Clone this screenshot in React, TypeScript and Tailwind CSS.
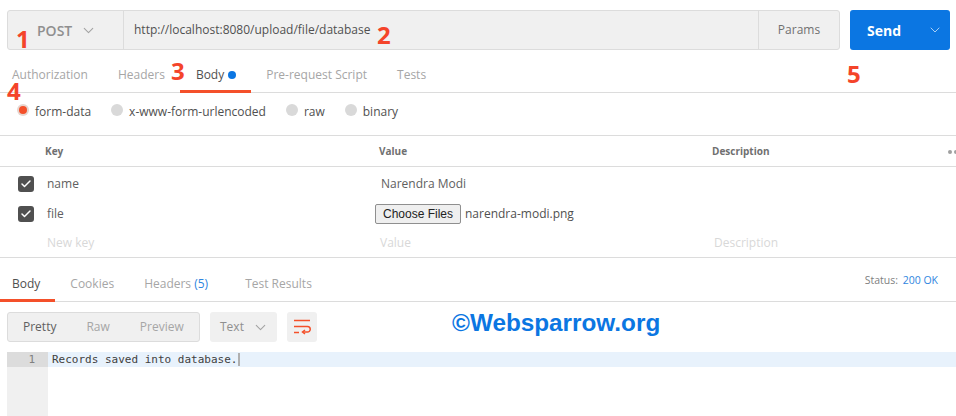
import { Check, ChevronDown } from 'lucide-react';

const font = "font-['Open_Sans',sans-serif]";
const tabClass = 'text-[12px] leading-none text-[#a6a6a6]';
const noteClass = "absolute font-['Open_Sans',sans-serif] text-[24px] leading-[18px] font-bold text-[#f4442a]";

function Radio({ active, label }: { active?: boolean; label: string }) {
    return (
        <div className="flex items-start gap-[6px]">
            {active ? (
                <span className="flex h-[12px] w-[12px] items-center justify-center rounded-full bg-[#e6d6d0]">
                    <span className="h-[8px] w-[8px] rounded-full bg-[#f4502a]" />
                </span>
            ) : (
                <span className="h-[12px] w-[12px] rounded-full bg-[#d9d9d9]" />
            )}
            <span className="text-[12px] leading-[16px] text-[#505050]">{label}</span>
        </div>
    );
}

function Box() {
    return (
        <span className="flex h-[16px] w-[16px] items-center justify-center rounded-[3px] bg-[#505050]">
            <Check size={12} strokeWidth={3} className="text-white" />
        </span>
    );
}

export default function App() {
    return (
        <div className={`${font} relative h-[416px] w-[956px] overflow-hidden bg-white`}>
            {/* request bar */}
            <div className="flex h-[50px] items-end pl-[7px] pr-[6px]">
                <div className="flex h-[40px] w-[833px] rounded-[3px] border border-[#dcdcdc] bg-[#f0f0f0]">
                    <div className="flex w-[116px] items-center border-r border-[#dcdcdc] pl-[29px] pt-[1px]">
                        <span className="text-[14px] font-semibold text-[#8f8f8f]">POST</span>
                        <ChevronDown size={17} strokeWidth={1.5} className="ml-[8px] text-[#a3a3a3]" />
                    </div>
                    <div className="flex-1 pl-[10px] pt-[10px] text-[12px] leading-[18px] text-[#505050]">http://localhost:8080/upload/file/database</div>
                    <div className="flex w-[81px] items-center justify-center border-l border-[#dcdcdc] text-[12px] text-[#707070]">Params</div>
                </div>
                <div className="ml-[10px] flex h-[40px] w-[100px] items-center rounded-[3px] bg-[#0b76e2] pl-[17px] text-white">
                    <span className="text-[14px] font-bold">Send</span>
                    <ChevronDown size={16} strokeWidth={1.5} className="ml-[26px] text-[#a9cff5]" />
                </div>
            </div>

            {/* request tabs */}
            <div className="relative flex h-[43px] items-start border-b border-[#dcdcdc] pl-[12px] pt-[19px]">
                <span className={tabClass}>Authorization</span>
                <span className={`${tabClass} ml-[30px]`}>Headers</span>
                <span className="ml-[31px] flex items-center text-[12px] leading-none text-[#505050]">
                    Body
                    <span className="ml-[4px] h-[8px] w-[8px] rounded-full bg-[#0b76e2]" />
                </span>
                <span className={`${tabClass} ml-[30px]`}>Pre-request Script</span>
                <span className={`${tabClass} ml-[30px]`}>Tests</span>
                <span className="absolute bottom-[-1px] left-[180px] h-[3px] w-[71px] bg-[#f4502a]" />
            </div>

            {/* body type */}
            <div className="flex h-[43px] gap-[20px] border-b border-[#dcdcdc] pl-[17px] pt-[11px]">
                <Radio active label="form-data" />
                <Radio label="x-www-form-urlencoded" />
                <Radio label="raw" />
                <Radio label="binary" />
            </div>

            {/* params table */}
            <div className="grid h-[31px] grid-cols-[379px_333px_1fr] items-center border-b border-[#dcdcdc] pt-[1px] text-[10px] font-bold text-[#707070]">
                <span className="pl-[45px]">Key</span>
                <span>Value</span>
                <div className="flex items-center justify-between">
                    <span>Description</span>
                    <div className="mr-[-2px] flex gap-[2px]">
                        <span className="h-[4px] w-[4px] rounded-full bg-[#a0a0a0]" />
                        <span className="h-[4px] w-[4px] rounded-full bg-[#a0a0a0]" />
                    </div>
                </div>
            </div>
            <div className="grid h-[30px] grid-cols-[45px_336px_1fr] items-center pt-[3px] text-[12px] text-[#606060]">
                <div className="pl-[18px]"><Box /></div>
                <span className="pl-[2px]">name</span>
                <span>Narendra Modi</span>
            </div>
            <div className="grid h-[31px] grid-cols-[45px_330px_1fr] items-center pt-[3px] text-[12px] text-[#606060]">
                <div className="pl-[18px]"><Box /></div>
                <span className="pl-[2px]">file</span>
                <div className="flex items-center gap-[4px]">
                    <span className="flex h-[20px] w-[86px] items-center justify-center rounded-[2px] border border-[#8f8f8f] bg-[#efefef] font-['Liberation_Sans',sans-serif] text-[12px] text-[#222]">Choose Files</span>
                    <span className="text-[#505050]">narendra-modi.png</span>
                </div>
            </div>
            <div className="grid h-[30px] grid-cols-[47px_333px_334px_1fr] items-center border-b border-[#dcdcdc] text-[12px] text-[#d8d8d8]">
                <span />
                <span>New key</span>
                <span>Value</span>
                <span>Description</span>
            </div>

            {/* response tabs */}
            <div className="relative flex h-[44px] items-start border-b border-[#dcdcdc] pl-[12px] pt-[20px]">
                <span className="text-[12px] leading-none text-[#505050]">Body</span>
                <span className={`${tabClass} ml-[30px]`}>Cookies</span>
                <span className={`${tabClass} ml-[30px]`}>
                    Headers <span className="text-[#2f86e0]">(5)</span>
                </span>
                <span className={`${tabClass} ml-[37px]`}>Test Results</span>
                <span className="ml-auto mr-[18px] mt-[-3px] text-[10.5px] leading-none text-[#808080]">
                    Status: <span className="ml-[2px] text-[#2f86e0]">200 OK</span>
                </span>
                <span className="absolute bottom-[-1px] left-0 h-[3px] w-[55px] bg-[#f4502a]" />
            </div>

            {/* response toolbar */}
            <div className="flex h-[50px] items-start pl-[7px] pt-[10px] text-[12px]">
                <div className="flex h-[30px] w-[193px] items-center rounded-[3px] border border-[#dcdcdc] bg-[#f0f0f0] pl-[15px]">
                    <span className="text-[#606060]">Pretty</span>
                    <span className="ml-[30px] text-[#a6a6a6]">Raw</span>
                    <span className="ml-[30px] text-[#a6a6a6]">Preview</span>
                </div>
                <div className="ml-[10px] flex h-[30px] w-[67px] items-center rounded-[3px] bg-[#f0f0f0] pl-[10px] text-[#8f8f8f]">
                    Text
                    <ChevronDown size={17} strokeWidth={1.5} className="ml-[8px] text-[#a3a3a3]" />
                </div>
                <div className="ml-[10px] flex h-[30px] w-[30px] items-center justify-center rounded-[3px] bg-[#f0f0f0]">
                    <svg width="18" height="16" viewBox="0 0 18 16" fill="none" stroke="#f4502a" strokeWidth="1.5">
                        <path d="M1 1.5h16" />
                        <path d="M1 7.5h13.5a2.5 2.5 0 0 1 0 5.5H10" />
                        <path d="M1 13.5h5" />
                        <path d="M12 11l-2.5 2 2.5 2" />
                    </svg>
                </div>
            </div>

            {/* response body */}
            <div className="ml-[7px] flex h-[64px] font-['DejaVu_Sans_Mono',monospace] text-[11px] leading-[15px]">
                <div className="w-[41px] bg-[#f0f0f0]">
                    <div className="h-[15px] bg-[#dcdcdc] pr-[13px] text-right text-[#808080]">1</div>
                </div>
                <div className="h-[15px] flex-1 bg-[#e8f2fc] pl-[4px] text-[#404040]">
                    <span className="border-r-2 border-[#b0b0b0] pr-[1px]">Records saved into database.</span>
                </div>
            </div>

            {/* notes drawn on top of the screenshot */}
            <span className={`${noteClass} left-[16px] top-[30px]`}>1</span>
            <span className={`${noteClass} left-[377px] top-[26px]`}>2</span>
            <span className={`${noteClass} left-[171px] top-[62px]`}>3</span>
            <span className={`${noteClass} left-[7px] top-[82px]`}>4</span>
            <span className={`${noteClass} left-[847px] top-[65px]`}>5</span>
            <span className="absolute left-[452px] top-[309px] font-['Liberation_Sans',sans-serif] text-[24.3px] leading-[28px] font-bold text-[#0b76e2]">©Websparrow.org</span>
        </div>
    );
}
